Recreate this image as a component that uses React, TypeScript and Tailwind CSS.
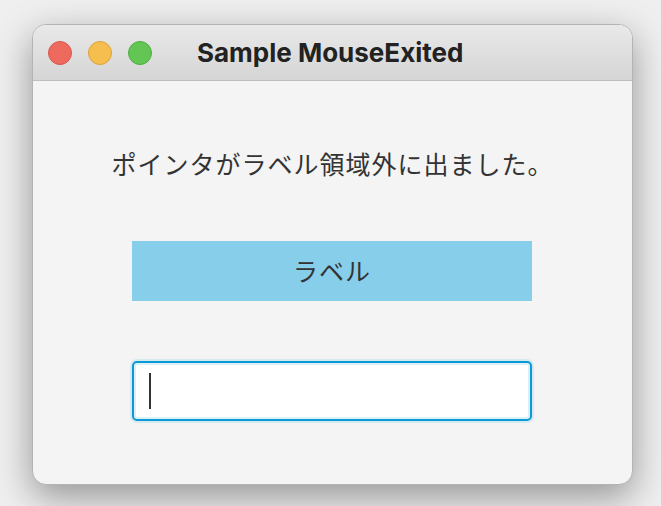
import React from "react";

export default function App() {
  return (
    <div className="w-[661px] h-[506px] bg-[#efefef] overflow-hidden pt-[24px] pl-[32px]">
      <div className="w-[601px] h-[461px] rounded-[14px] border border-[#b4b4b4] bg-[#f4f4f4] overflow-hidden shadow-[0_12px_36px_rgba(0,0,0,0.38)] flex flex-col">
        <div className="h-[56px] shrink-0 bg-gradient-to-b from-[#e9e9e9] to-[#d5d5d5] border-b border-[#bdbdbd] flex items-center relative">
          <div className="flex items-center gap-[16px] pl-[15px]">
            <div className="w-[24px] h-[24px] rounded-full bg-[#ee6a5f] border border-[#d8574d]" />
            <div className="w-[24px] h-[24px] rounded-full bg-[#f6be4f] border border-[#dca33a]" />
            <div className="w-[24px] h-[24px] rounded-full bg-[#62c554] border border-[#4fad43]" />
          </div>
          <div className="ml-[45px] text-[26px] font-bold text-[#222] leading-none font-['Inter',sans-serif] tracking-[0px]">
            Sample MouseExited
          </div>
        </div>
        <div className="flex-1 flex flex-col items-center font-['Noto_Sans_CJK_JP',sans-serif] text-[#333]">
          <div className="mt-[66px] h-[32px] leading-[32px] text-[25px] tracking-[1px] text-[#333]">
            ポインタがラベル領域外に出ました。
          </div>
          <div className="mt-[62px] w-[400px] h-[60px] bg-[#87ceeb] flex items-center justify-center text-[25px] tracking-[1px] text-[#333] ml-[-1px]">
            ラベル
          </div>
          <div className="mt-[60px] ml-[-1px] w-[400px] h-[60px] rounded-[5px] border-2 border-[#0a9ad6] bg-white shadow-[0_0_0_2px_rgba(10,154,214,0.12),inset_0_0_0_2px_#dcf0fa] flex items-center pl-[15px]">
            <div className="w-[2px] h-[36px] bg-[#333]" />
          </div>
        </div>
      </div>
    </div>
  );
}
